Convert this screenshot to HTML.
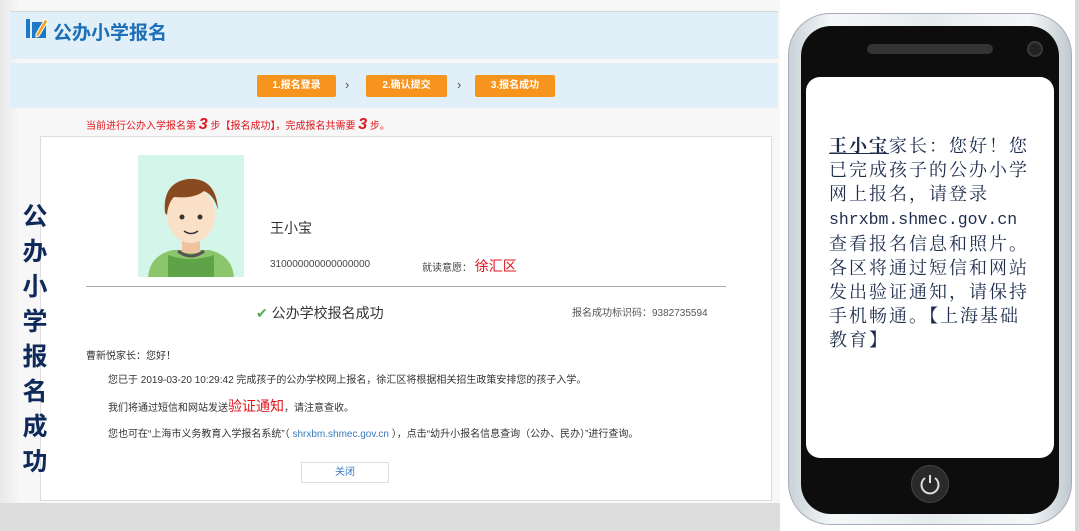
<!DOCTYPE html>
<html><head><meta charset="utf-8"><style>
*{margin:0;padding:0;box-sizing:border-box}
body{width:1080px;height:531px;position:relative;background:#fff;font-family:"Liberation Sans","Noto Sans CJK SC",sans-serif;overflow:hidden}
.abs{position:absolute}
</style></head><body>
<div class="abs" style="left:0;top:0;width:780px;height:531px;background:linear-gradient(90deg,#e8e8e8,#f7f7f7 20px,#f7f7f7)"></div>
<div class="abs" style="left:0;top:503px;width:780px;height:28px;background:#dcdcdc"></div>
<div class="abs" style="left:10px;top:11px;width:768px;height:48px;background:#e1eff8;border-top:1px solid #cfd8de"></div>
<svg class="abs" style="left:26px;top:16px" width="22" height="24" viewBox="0 0 22 24"><rect x="0" y="3" width="4" height="19" fill="#1f77c8"/><path d="M6 6 H20 V22 H6Z" fill="#1f77c8"/><path d="M10 18 L19 3 L22 5 L13 20 L10 21Z" fill="#f3a31d" stroke="#fff" stroke-width="1"/></svg>
<div class="abs" style="left:53px;top:18px;font-size:19px;font-weight:bold;color:#1d6fb8">公办小学报名</div>
<div class="abs" style="left:10px;top:63px;width:768px;height:45px;background:#e1eff8"></div>
<div class="abs" style="left:257px;top:75px;width:79px;height:22px;background:#f7941d;color:#fff;font-size:10px;font-weight:bold;text-align:center;line-height:22px;border-radius:2px">1.报名登录</div>
<div class="abs" style="left:345px;top:77px;font-size:13px;color:#555">›</div>
<div class="abs" style="left:366px;top:75px;width:81px;height:22px;background:#f7941d;color:#fff;font-size:10px;font-weight:bold;text-align:center;line-height:22px;border-radius:2px">2.确认提交</div>
<div class="abs" style="left:457px;top:77px;font-size:13px;color:#555">›</div>
<div class="abs" style="left:475px;top:75px;width:80px;height:22px;background:#f7941d;color:#fff;font-size:10px;font-weight:bold;text-align:center;line-height:22px;border-radius:2px">3.报名成功</div>
<div class="abs" style="left:86px;top:116px;font-size:10px;color:#e0161e;white-space:nowrap">当前进行公办入学报名第 <b style="font-size:16px;font-style:italic">3</b> 步【报名成功】，完成报名共需要 <b style="font-size:16px;font-style:italic">3</b> 步。</div>
<div class="abs" style="left:40px;top:136px;width:732px;height:365px;background:#fff;border:1px solid #ddd"></div>
<svg class="abs" style="left:138px;top:155px" width="106" height="122" viewBox="0 0 106 122"><rect width="106" height="122" fill="#d4f5ea"/><path d="M10 122 Q12 100 35 95 L71 95 Q94 100 96 122Z" fill="#8cc66a"/><path d="M30 122 L30 100 Q53 108 76 100 L76 122Z" fill="#5fa348"/><rect x="44" y="78" width="18" height="20" fill="#f0c2a0"/><path d="M40 96 Q53 106 66 96" stroke="#555" stroke-width="3" fill="none"/><ellipse cx="53" cy="60" rx="24" ry="28" fill="#fbe0c8"/><path d="M27 58 Q24 28 50 24 Q78 22 80 55 Q76 40 66 36 Q56 44 36 42 Q30 48 29 60Z" fill="#8a4a1f"/><circle cx="44" cy="62" r="2.5" fill="#333"/><circle cx="62" cy="62" r="2.5" fill="#333"/><path d="M46 76 Q53 81 60 76" stroke="#333" stroke-width="1.5" fill="none"/></svg>
<div class="abs" style="left:270px;top:218px;font-size:14px;color:#333">王小宝</div>
<div class="abs" style="left:270px;top:259px;font-size:10px;color:#444">310000000000000000</div>
<div class="abs" style="left:422px;top:256px;font-size:10px;color:#444">就读意愿： <span style="font-size:14px;color:#e0161e">徐汇区</span></div>
<div class="abs" style="left:86px;top:286px;width:640px;height:1px;background:#aaa"></div>
<div class="abs" style="left:256px;top:303px;font-size:14px;color:#333"><span style="color:#4caf50">✔</span> 公办学校报名成功</div>
<div class="abs" style="left:572px;top:304px;font-size:10px;color:#555">报名成功标识码：9382735594</div>
<div class="abs" style="left:86px;top:347px;font-size:10px;color:#333">曹新悦家长：您好！</div>
<div class="abs" style="left:108px;top:371px;font-size:10px;color:#333;white-space:nowrap">您已于 2019-03-20 10:29:42 完成孩子的公办学校网上报名，徐汇区将根据相关招生政策安排您的孩子入学。</div>
<div class="abs" style="left:108px;top:396px;font-size:10px;color:#333;white-space:nowrap">我们将通过短信和网站发送<span style="font-size:14px;color:#e0161e">验证通知</span>，请注意查收。</div>
<div class="abs" style="left:108px;top:425px;font-size:10px;color:#333;white-space:nowrap">您也可在“上海市义务教育入学报名系统”（ <span style="color:#3a7bc0">shrxbm.shmec.gov.cn</span> ），点击“幼升小报名信息查询（公办、民办）”进行查询。</div>
<div class="abs" style="left:301px;top:462px;width:88px;height:21px;border:1px solid #ddd;font-size:10px;color:#3a7bc0;text-align:center;line-height:19px">关闭</div>
<div class="abs" style="left:20px;top:200px;width:30px;font-size:25px;line-height:35px;color:#0f2a5a;font-weight:bold;text-align:center">公<br>办<br>小<br>学<br>报<br>名<br>成<br>功</div>
<div class="abs" style="left:1075px;top:0;width:5px;height:531px;background:#d8d8d8"></div>
<div class="abs" style="left:788px;top:13px;width:284px;height:512px;border-radius:42px;background:linear-gradient(90deg,#c9d3d8,#f4f7f8 15%,#e6ecee 50%,#f4f7f8 85%,#c0cacf);border:1px solid #aab"></div>
<div class="abs" style="left:801px;top:26px;width:258px;height:488px;border-radius:30px;background:#0d0d0d"></div>
<div class="abs" style="left:867px;top:44px;width:126px;height:10px;border-radius:5px;background:#333"></div>
<div class="abs" style="left:1027px;top:41px;width:16px;height:16px;border-radius:50%;background:#222;border:2px solid #3a3a3a"></div>
<div class="abs" style="left:806px;top:77px;width:248px;height:381px;border-radius:14px;background:#fff"></div>
<div class="abs" style="left:829px;top:134px;width:230px;white-space:nowrap;font-family:'Liberation Serif','Noto Serif CJK SC',serif;font-size:18px;letter-spacing:2px;line-height:24px;color:#1e2d4d"><span style="text-decoration:underline;font-weight:bold">王小宝</span>家长：您好！您<br>已完成孩子的公办小学<br>网上报名，请登录<br><span style="font-family:'Liberation Mono',monospace;font-size:16.5px;letter-spacing:0">shrxbm.shmec.gov.cn</span><br>查看报名信息和照片。<br>各区将通过短信和网站<br>发出验证通知，请保持<br>手机畅通。【上海基础<br>教育】</div>
<div class="abs" style="left:911px;top:465px;width:38px;height:38px;border-radius:50%;background:#2a2a2a;border:1px solid #444"></div>
<svg class="abs" style="left:916px;top:470px" width="28" height="28" viewBox="0 0 28 28"><path d="M9 8 A8.5 8.5 0 1 0 19 8" stroke="#ddd" stroke-width="2" fill="none"/><line x1="14" y1="5" x2="14" y2="13" stroke="#ddd" stroke-width="2"/></svg>
</body></html>
